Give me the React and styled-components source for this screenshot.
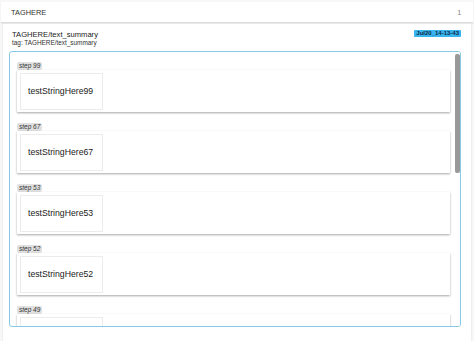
import React from "react";
import styled, { createGlobalStyle } from "styled-components";

const GlobalStyle = createGlobalStyle`
  html, body {
    margin: 0;
    padding: 0;
    background: #f7f7f7;
    font-family: "Liberation Sans", Helvetica, Arial, sans-serif;
    color: #222;
  }
  * {
    box-sizing: border-box;
  }
`;

const Page = styled.div`
  width: 474px;
  height: 341px;
  overflow: hidden;
  display: flex;
  flex-direction: column;
`;

const TopBar = styled.div`
  margin: 2px 1px 0 1px;
  height: 21px;
  background: #fff;
  border-bottom: 1px solid #dcdcdc;
  box-shadow: 0 1px 1px rgba(0, 0, 0, 0.06);
  display: flex;
  align-items: center;
  justify-content: space-between;
  padding: 0 12px 0 10px;
  font-size: 7.4px;
  color: #333;
`;

const Count = styled.span`
  font-size: 6.5px;
  color: #777;
`;

const Panel = styled.div`
  flex: 1;
  margin: 1px 2px 0 2px;
  background: #fff;
  border-left: 1px solid #efefef;
  border-right: 1px solid #efefef;
  padding: 5px 10px 0 6px;
`;

const Header = styled.div`
  display: flex;
  justify-content: space-between;
  align-items: flex-start;
  padding-left: 3px;
`;

const TitleBlock = styled.div`
  display: flex;
  flex-direction: column;
  padding-top: 1px;
`;

const Title = styled.div`
  font-size: 7.6px;
  line-height: 9px;
  color: #1a1a1a;
`;

const SubTitle = styled.div`
  font-size: 6.4px;
  line-height: 8px;
  color: #333;
`;

const RunBadge = styled.span`
  margin-top: 1px;
  background: #38b4ef;
  color: #0f2a44;
  font-weight: bold;
  font-size: 6px;
  line-height: 7px;
  padding: 0 2px;
  border-radius: 1px;
`;

const ScrollBox = styled.div`
  margin-top: 4px;
  height: 276px;
  border: 1.5px solid #88c8e4;
  border-radius: 3px;
  display: flex;
  overflow: hidden;
`;

const List = styled.div`
  flex: 1;
  overflow: hidden;
  padding: 9.5px 5px 0 7px;
`;

const Track = styled.div`
  width: 5px;
  padding-top: 1.5px;
  background: #fff;
`;

const Thumb = styled.div`
  height: 119px;
  background: #999;
  border-radius: 2px;
`;

const Item = styled.div`
  display: flex;
  flex-direction: column;
  align-items: stretch;
  margin-bottom: 11px;
`;

const StepTag = styled.span`
  align-self: flex-start;
  background: #e0e0e0;
  color: #333;
  font-style: italic;
  font-size: 6.5px;
  line-height: 8px;
  padding: 0 2px;
  border-radius: 2px;
`;

const Card = styled.div`
  background: #fff;
  box-shadow: 0 1px 2px rgba(0, 0, 0, 0.35);
  padding: 3px 0 2px 3px;
`;

const TextBox = styled.div`
  width: 83px;
  height: 37px;
  border: 1px solid #ececec;
  padding-left: 7px;
  display: flex;
  align-items: center;
  font-size: 8.7px;
  color: #222;
`;

const steps = [99, 67, 53, 52, 49, 42, 31, 20, 11, 3];

export default function App() {
  return (
    <>
      <GlobalStyle />
      <Page>
        <TopBar>
          <span>TAGHERE</span>
          <Count>1</Count>
        </TopBar>
        <Panel>
          <Header>
            <TitleBlock>
              <Title>TAGHERE/text_summary</Title>
              <SubTitle>tag: TAGHERE/text_summary</SubTitle>
            </TitleBlock>
            <RunBadge>Jul20_14-13-43</RunBadge>
          </Header>
          <ScrollBox>
            <List>
              {steps.map((s) => (
                <Item key={s}>
                  <StepTag>step {s}</StepTag>
                  <Card>
                    <TextBox>testStringHere{s}</TextBox>
                  </Card>
                </Item>
              ))}
            </List>
            <Track>
              <Thumb />
            </Track>
          </ScrollBox>
        </Panel>
      </Page>
    </>
  );
}
